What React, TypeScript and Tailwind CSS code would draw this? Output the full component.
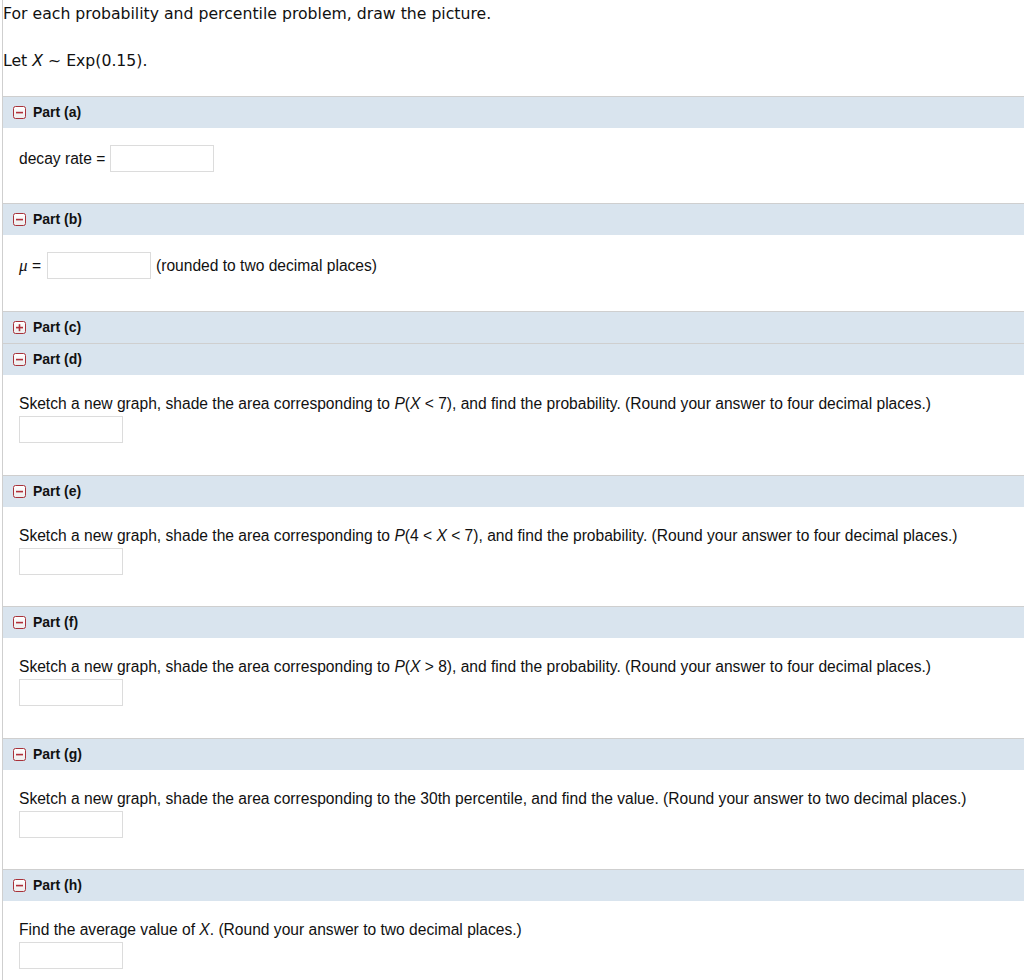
import React from "react";

const body = { fontFamily: '"Liberation Sans", Arial, sans-serif' };
const mono = { fontFamily: '"DejaVu Sans", Verdana, sans-serif' };

function Toggle({ open }: { open: boolean }) {
  return (
    <svg width="13" height="13" viewBox="0 0 13 13" className="shrink-0">
      <defs>
        <linearGradient id={open ? "tg-o" : "tg-c"} x1="0" y1="0" x2="0" y2="1">
          <stop offset="0" stopColor="#ffffff" />
          <stop offset="1" stopColor="#ececec" />
        </linearGradient>
      </defs>
      <rect x="0.5" y="0.5" width="12" height="12" rx="2" fill={`url(#${open ? "tg-o" : "tg-c"})`} stroke="#a8323a" />
      <rect x="3" y="5.8" width="7" height="1.6" fill="#b0303a" />
      {!open && <rect x="5.7" y="3.2" width="1.6" height="7" fill="#b0303a" />}
    </svg>
  );
}

function Bar({ label, open = true }: { label: string; open?: boolean }) {
  return (
    <div className="h-[32px] border-t border-[#cfcfcf] bg-[#d9e4ee] flex items-center pl-[10px] gap-[7px]">
      <Toggle open={open} />
      <span className="text-[14px] font-bold text-[#111]" style={body}>
        {label}
      </span>
    </div>
  );
}

function Box({ className = "" }: { className?: string }) {
  return <div className={`w-[104px] h-[27px] border border-[#dcdcdc] bg-white ${className}`} />;
}

function Sketch({ label, children }: { label: string; children: React.ReactNode }) {
  return (
    <>
      <Bar label={label} />
      <div className="pl-[16px] pt-[20px] pb-[31.5px] text-[15.6px] text-[#111]" style={body}>
        <div className="leading-[18px]">{children}</div>
        <Box className="mt-[3px]" />
      </div>
    </>
  );
}

export default function App() {
  return (
    <div className="bg-white min-h-[980px] w-[1024px]">
      <div className="ml-[2px] border-l border-[#cfcfcf] min-h-[980px]">
        <div className="pt-[5px] pb-[26px] text-[15.7px] text-[#111]" style={mono}>
          <p className="leading-[18px]">For each probability and percentile problem, draw the picture.</p>
          <p className="leading-[18px] mt-[29px]">
            Let <i>X</i> ∼ Exp(0.15).
          </p>
        </div>

        <Bar label="Part (a)" />
        <div className="pl-[16px] pt-[17px] pb-[31px] flex items-center text-[15.6px] text-[#111]" style={body}>
          <span>decay rate =</span>
          <Box className="ml-[5px]" />
        </div>

        <Bar label="Part (b)" />
        <div className="pl-[16px] pt-[17px] pb-[32px] flex items-center text-[15.6px] text-[#111]" style={body}>
          <span>
            <i className="text-[17px]" style={{ fontFamily: '"Liberation Serif", serif' }}>
              μ
            </i>{" "}
            =
          </span>
          <Box className="ml-[6px]" />
          <span className="ml-[5px]">(rounded to two decimal places)</span>
        </div>

        <Bar label="Part (c)" open={false} />

        <Sketch label="Part (d)">
          Sketch a new graph, shade the area corresponding to <i>P</i>(<i>X</i> &lt; 7), and find the probability. (Round
          your answer to four decimal places.)
        </Sketch>

        <Sketch label="Part (e)">
          Sketch a new graph, shade the area corresponding to <i>P</i>(4 &lt; <i>X</i> &lt; 7), and find the probability.
          (Round your answer to four decimal places.)
        </Sketch>

        <Sketch label="Part (f)">
          Sketch a new graph, shade the area corresponding to <i>P</i>(<i>X</i> &gt; 8), and find the probability. (Round
          your answer to four decimal places.)
        </Sketch>

        <Sketch label="Part (g)">
          Sketch a new graph, shade the area corresponding to the 30th percentile, and find the value. (Round your answer
          to two decimal places.)
        </Sketch>

        <Sketch label="Part (h)">
          Find the average value of <i>X</i>. (Round your answer to two decimal places.)
        </Sketch>
      </div>
    </div>
  );
}
